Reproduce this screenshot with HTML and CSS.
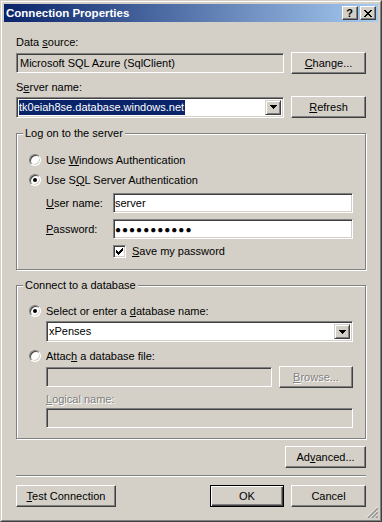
FILE: index.html
```html
<!DOCTYPE html>
<html lang="en">
<head>
  <meta charset="UTF-8">
  <title>Connection Properties</title>
  <link rel="stylesheet" href="styles.css">
</head>
<body>
  <div class="window">
    <div class="frame">

      <!-- Caption -->
      <div class="titlebar">
        <span class="title">Connection Properties</span>
        <button class="cap-btn help">?</button>
        <button class="cap-btn close">
          <svg width="8" height="7" viewBox="0 0 8 7" shape-rendering="crispEdges">
            <rect x="0" y="0" width="2" height="1"/><rect x="6" y="0" width="2" height="1"/>
            <rect x="1" y="1" width="2" height="1"/><rect x="5" y="1" width="2" height="1"/>
            <rect x="2" y="2" width="4" height="1"/>
            <rect x="3" y="3" width="2" height="1"/>
            <rect x="2" y="4" width="4" height="1"/>
            <rect x="1" y="5" width="2" height="1"/><rect x="5" y="5" width="2" height="1"/>
            <rect x="0" y="6" width="2" height="1"/><rect x="6" y="6" width="2" height="1"/>
          </svg>
        </button>
      </div>

      <div class="client">
        <div class="label">Data <u>s</u>ource:</div>
        <div class="row row-source">
          <div class="textbox readonly source">Microsoft SQL Azure (SqlClient)</div>
          <button class="btn side"><u>C</u>hange...</button>
        </div>

        <div class="label label-server">S<u>e</u>rver name:</div>
        <div class="row row-server">
          <div class="combo server">
            <span class="combo-text"><span class="selected">tk0eiah8se.database.windows.net</span></span>
            <span class="drop">
              <svg width="7" height="4" viewBox="0 0 7 4" shape-rendering="crispEdges">
                <rect x="0" y="0" width="7" height="1"/><rect x="1" y="1" width="5" height="1"/>
                <rect x="2" y="2" width="3" height="1"/><rect x="3" y="3" width="1" height="1"/>
              </svg>
            </span>
          </div>
          <button class="btn side"><u>R</u>efresh</button>
        </div>

        <!-- Log on -->
        <fieldset class="group group-logon">
          <legend>Log on to the server</legend>
          <div class="opt"><span class="radio"></span><span>Use <u>W</u>indows Authentication</span></div>
          <div class="opt"><span class="radio checked"></span><span>Use S<u>Q</u>L Server Authentication</span></div>
          <div class="field">
            <span class="field-label"><u>U</u>ser name:</span>
            <div class="textbox">server</div>
          </div>
          <div class="field field-pass">
            <span class="field-label"><u>P</u>assword:</span>
            <div class="textbox"><span class="dots">●●●●●●●●●●●</span></div>
          </div>
          <div class="check-row">
            <span class="checkbox">
              <svg width="7" height="7" viewBox="0 0 7 7" shape-rendering="crispEdges">
                <rect x="0" y="2" width="1" height="3"/><rect x="1" y="3" width="1" height="3"/>
                <rect x="2" y="4" width="1" height="3"/><rect x="3" y="3" width="1" height="3"/>
                <rect x="4" y="2" width="1" height="3"/><rect x="5" y="1" width="1" height="3"/>
                <rect x="6" y="0" width="1" height="3"/>
              </svg>
            </span>
            <span><u>S</u>ave my password</span>
          </div>
        </fieldset>

        <!-- Database -->
        <fieldset class="group group-db">
          <legend>Connect to a database</legend>
          <div class="opt"><span class="radio checked"></span><span>Select or enter a <u>d</u>atabase name:</span></div>
          <div class="combo db">
            <span class="combo-text">xPenses</span>
            <span class="drop">
              <svg width="7" height="4" viewBox="0 0 7 4" shape-rendering="crispEdges">
                <rect x="0" y="0" width="7" height="1"/><rect x="1" y="1" width="5" height="1"/>
                <rect x="2" y="2" width="3" height="1"/><rect x="3" y="3" width="1" height="1"/>
              </svg>
            </span>
          </div>
          <div class="opt opt-attach"><span class="radio"></span><span>Attac<u>h</u> a database file:</span></div>
          <div class="file-row">
            <div class="textbox readonly file"></div>
            <button class="btn browse disabled"><u>B</u>rowse...</button>
          </div>
          <div class="label indent disabled"><u>L</u>ogical name:</div>
          <div class="textbox readonly indent logical"></div>
        </fieldset>

        <div class="actions">
          <button class="btn advanced">Ad<u>v</u>anced...</button>
        </div>

        <div class="separator"></div>

        <div class="footer">
          <button class="btn test"><u>T</u>est Connection</button>
          <button class="btn default">OK</button>
          <button class="btn side">Cancel</button>
        </div>

        <svg class="grip" width="12" height="12" viewBox="0 0 12 12">
          <path d="M12 0.5L0.5 12M12 4.5L4.5 12M12 8.5L8.5 12" stroke="#fff" fill="none"/>
          <path d="M12 1.5L1.5 12M12 2.5L2.5 12M12 5.5L5.5 12M12 6.5L6.5 12M12 9.5L9.5 12M12 10.5L10.5 12" stroke="#808080" fill="none"/>
        </svg>
      </div>
    </div>
  </div>
</body>
</html>
```

FILE: styles.css
```css
* {
  box-sizing: border-box;
}

body {
  margin: 0;
  background: #D4D0C8;
  font: 11px/13px "Liberation Sans", Arial, sans-serif;
  color: #000;
}

/* Window frame */
.window {
  width: 382px;
  height: 522px;
  border: 1px solid;
  border-color: #D4D0C8 #404040 #404040 #D4D0C8;
  background: #D4D0C8;
}

.frame {
  height: 100%;
  border: 1px solid;
  border-color: #fff #808080 #808080 #fff;
  padding: 2px;
  display: flex;
  flex-direction: column;
}

.titlebar {
  height: 18px;
  display: flex;
  align-items: center;
  padding: 0 2px;
  background: linear-gradient(to right, #0A246A, #A6CAF0);
}

.title {
  flex: 1;
  color: #fff;
  font-weight: bold;
  font-size: 11.5px;
  line-height: 18px;
}

.cap-btn {
  width: 16px;
  height: 14px;
  margin: 0 0 0 2px;
  padding: 0;
  display: flex;
  align-items: center;
  justify-content: center;
  background: #D4D0C8;
  border: 1px solid;
  border-color: #fff #404040 #404040 #fff;
  box-shadow: inset -1px -1px #808080;
  font: bold 11px/12px "Liberation Sans", Arial, sans-serif;
  color: #000;
}

.cap-btn.help {
  padding-right: 1px;
}

.client {
  flex: 1;
  position: relative;
  padding: 14px 12px 0;
}

/* Text and rows */
.label {
  height: 13px;
}

.label-server {
  margin-top: 7px;
}

.row {
  display: flex;
  align-items: center;
}

.row-source {
  margin-top: 3px;
}

.row-server {
  margin-top: 2px;
}

/* Controls */
.btn {
  height: 22px;
  margin: 0;
  padding: 0;
  background: #D4D0C8;
  border: 1px solid;
  border-color: #fff #404040 #404040 #fff;
  box-shadow: inset -1px -1px #808080;
  font: 11px/13px "Liberation Sans", Arial, sans-serif;
  color: #000;
}

.btn.side {
  width: 75px;
  margin-left: 7px;
}

.btn.default {
  width: 74px;
  margin-left: auto;
  border-color: #000;
  box-shadow: inset 1px 1px #fff, inset -1px -1px #404040, inset -2px -2px #808080;
}

.btn.disabled,
.label.disabled {
  color: #808080;
  text-shadow: 1px 1px 0 #fff;
}

.textbox {
  height: 20px;
  padding: 0 1px;
  background: #fff;
  border: 1px solid;
  border-color: #808080 #fff #fff #808080;
  box-shadow: inset 1px 1px #404040, inset -1px -1px #D4D0C8;
  line-height: 18px;
  white-space: nowrap;
  overflow: hidden;
}

.textbox.readonly {
  background: #D4D0C8;
}

.textbox.source {
  width: 268px;
  padding-left: 3px;
}

.combo {
  height: 21px;
  display: flex;
  background: #fff;
  border: 1px solid;
  border-color: #808080 #fff #fff #808080;
  box-shadow: inset 1px 1px #404040, inset -1px -1px #D4D0C8;
  padding: 2px;
}

.combo.server {
  width: 268px;
}

.combo-text {
  flex: 1;
  display: flex;
  align-items: center;
  padding-left: 0;
  white-space: nowrap;
  overflow: hidden;
}

.selected {
  background: #0A246A;
  color: #fff;
  line-height: 15px;
  padding-right: 1px;
}

.drop {
  width: 16px;
  display: flex;
  align-items: center;
  justify-content: center;
  background: #D4D0C8;
  border: 1px solid;
  border-color: #D4D0C8 #404040 #404040 #D4D0C8;
  box-shadow: inset 1px 1px #fff, inset -1px -1px #808080;
}

/* Group boxes */
.group {
  margin: 9px 0 0;
  padding: 10px 12px 11px 6px;
  min-width: 0;
  border: 1px solid #808080;
  box-shadow: inset 1px 1px #fff, 1px 1px #fff;
}

.group legend {
  padding: 0 2px;
  line-height: 13px;
  background: #D4D0C8;
}

.group-db {
  padding-top: 9px;
  padding-bottom: 10px;
}

.opt {
  height: 20px;
  display: flex;
  align-items: center;
  margin-left: 6px;
}

.opt-attach {
  margin-top: 4px;
}

.radio {
  width: 12px;
  height: 12px;
  margin-right: 5px;
  display: inline-flex;
  align-items: center;
  justify-content: center;
  border-radius: 50%;
  background: #fff;
  border: 1px solid;
  border-color: #808080 #fff #fff #808080;
  box-shadow: inset 1px 1px #404040, inset -1px -1px #D4D0C8;
}

.radio.checked::after {
  content: '';
  width: 4px;
  height: 4px;
  border-radius: 50%;
  background: #000;
}

.field {
  display: flex;
  align-items: center;
  margin: 3px 0 0 23px;
}

.field-pass {
  margin-top: 6px;
}

.field-label {
  width: 67px;
}

.field .textbox {
  flex: 1;
}

.dots {
  font-size: 10px;
  letter-spacing: 1px;
}

.check-row {
  height: 13px;
  display: flex;
  align-items: center;
  margin: 6px 0 0 90px;
}

.checkbox {
  width: 13px;
  height: 13px;
  margin-right: 6px;
  display: inline-flex;
  align-items: center;
  justify-content: center;
  background: #fff;
  border: 1px solid;
  border-color: #808080 #fff #fff #808080;
  box-shadow: inset 1px 1px #404040, inset -1px -1px #D4D0C8;
}

.combo.db {
  margin-left: 23px;
}

.file-row {
  display: flex;
  align-items: center;
  margin-left: 23px;
}

.textbox.file {
  width: 226px;
}

.btn.browse {
  width: 74px;
  margin-left: 7px;
}

.indent {
  margin-left: 23px;
}

.label.indent {
  margin-top: 5px;
}

.textbox.logical {
  margin-top: 2px;
}

/* Bottom */
.actions {
  display: flex;
  justify-content: flex-end;
  margin-top: 7px;
}

.btn.advanced {
  width: 81px;
}

.separator {
  height: 2px;
  margin-top: 7px;
  border-top: 1px solid #808080;
  border-bottom: 1px solid #fff;
}

.footer {
  display: flex;
  margin-top: 8px;
}

.btn.test {
  width: 100px;
}

.grip {
  position: absolute;
  right: 0;
  bottom: 0;
}
```
